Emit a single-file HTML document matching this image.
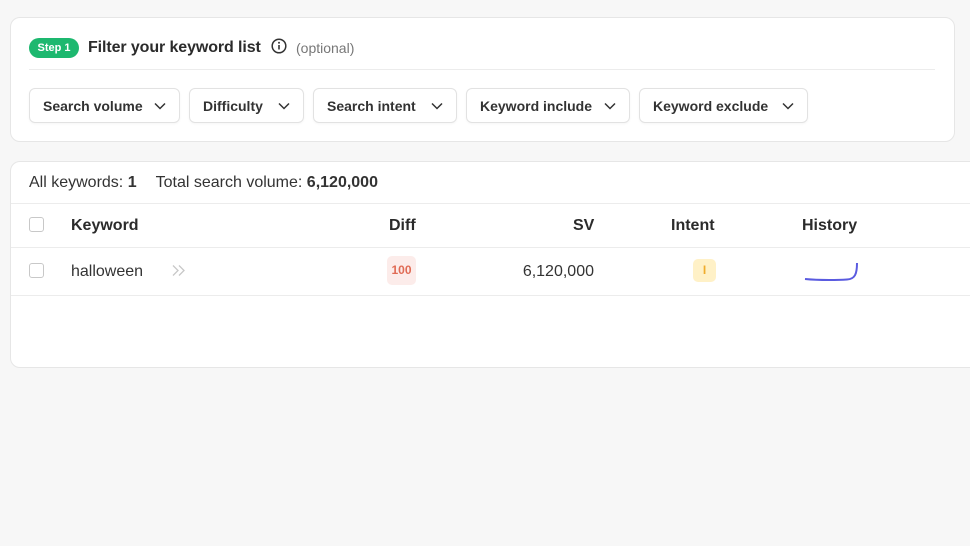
<!DOCTYPE html><html><head><meta charset="utf-8"><style>
*{box-sizing:border-box;margin:0;padding:0}
body{width:970px;height:546px;background:#f7f7f7;font-family:"Liberation Sans",sans-serif;color:#2b2b2b;position:relative;overflow:hidden}
.card{position:absolute;background:#fff;border:1px solid #e6e6e6;border-radius:10px}
.abs{position:absolute;white-space:nowrap}
.btn{position:absolute;top:88px;height:35px;border:1px solid #e2e2e2;border-radius:6px;font-size:14px;font-weight:bold;color:#333;padding-left:13px;line-height:34px;box-shadow:0 1px 2px rgba(0,0,0,.04)}
.btn svg{position:absolute;right:13px;top:13px}
.line{position:absolute;height:1px;background:#ececec}
.cb{position:absolute;width:15px;height:15px;border:1.5px solid #c8c8c8;border-radius:3px}
.th{font-size:16px;font-weight:bold;color:#2b2b2b}
</style></head><body>
<div class="card" style="left:10px;top:17px;width:945px;height:125px"></div>
<div class="abs" style="left:29px;top:38px;width:50px;height:20px;background:#1db86f;border-radius:10px;color:#fff;font-size:11px;font-weight:bold;text-align:center;line-height:20px">Step 1</div>
<div class="abs" style="left:88px;top:39px;font-size:16px;font-weight:bold;color:#2b2b2b;letter-spacing:-0.1px">Filter your keyword list</div>
<svg class="abs" style="left:271px;top:38px" width="16" height="16" viewBox="0 0 16 16"><circle cx="8" cy="8" r="6.8" fill="none" stroke="#333" stroke-width="1.5"/><line x1="8" y1="7" x2="8" y2="11.5" stroke="#333" stroke-width="1.6"/><circle cx="8" cy="4.8" r="1" fill="#333"/></svg>
<div class="abs" style="left:296px;top:40px;font-size:14px;color:#777">(optional)</div>
<div class="line" style="left:29px;top:69px;width:906px"></div>
<div class="btn" style="left:29px;width:151px">Search volume<svg width="12" height="8" viewBox="0 0 12 8"><path d="M1 1.5l5 5 5-5" fill="none" stroke="#333" stroke-width="1.5"/></svg></div>
<div class="btn" style="left:189px;width:115px">Difficulty<svg width="12" height="8" viewBox="0 0 12 8"><path d="M1 1.5l5 5 5-5" fill="none" stroke="#333" stroke-width="1.5"/></svg></div>
<div class="btn" style="left:313px;width:144px">Search intent<svg width="12" height="8" viewBox="0 0 12 8"><path d="M1 1.5l5 5 5-5" fill="none" stroke="#333" stroke-width="1.5"/></svg></div>
<div class="btn" style="left:466px;width:164px">Keyword include<svg width="12" height="8" viewBox="0 0 12 8"><path d="M1 1.5l5 5 5-5" fill="none" stroke="#333" stroke-width="1.5"/></svg></div>
<div class="btn" style="left:639px;width:169px">Keyword exclude<svg width="12" height="8" viewBox="0 0 12 8"><path d="M1 1.5l5 5 5-5" fill="none" stroke="#333" stroke-width="1.5"/></svg></div>

<div class="card" style="left:10px;top:161px;width:975px;height:207px"></div>
<div class="abs" style="left:29px;top:174px;font-size:16px;color:#333">All keywords: <b>1</b><span style="display:inline-block;width:19px"></span>Total search volume: <b>6,120,000</b></div>
<div class="line" style="left:11px;top:203px;width:959px"></div>
<div class="cb" style="left:29px;top:217px"></div>
<div class="abs th" style="left:71px;top:217px">Keyword</div>
<div class="abs th" style="left:389px;top:217px">Diff</div>
<div class="abs th" style="left:573px;top:217px">SV</div>
<div class="abs th" style="left:671px;top:217px">Intent</div>
<div class="abs th" style="left:802px;top:217px">History</div>
<div class="line" style="left:11px;top:247px;width:959px"></div>
<div class="cb" style="left:29px;top:263px"></div>
<div class="abs" style="left:71px;top:263px;font-size:16px;color:#333">halloween</div>
<svg class="abs" style="left:172px;top:264px" width="14" height="13" viewBox="0 0 14 13"><path d="M1 1.5l5 5-5 5M7 1.5l5 5-5 5" fill="none" stroke="#c8c8c8" stroke-width="1.3"/></svg>
<div class="abs" style="left:387px;top:256px;width:29px;height:29px;background:#fcecea;border-radius:5px;color:#e06b55;font-size:12px;font-weight:bold;text-align:center;line-height:29px">100</div>
<div class="abs" style="left:494px;width:100px;text-align:right;top:263px;font-size:16px;color:#333">6,120,000</div>
<div class="abs" style="left:693px;top:259px;width:23px;height:23px;background:#fff1c7;border-radius:5px;color:#f0ac2c;font-size:12px;font-weight:bold;text-align:center;line-height:23px">I</div>
<svg class="abs" style="left:800px;top:256px" width="64" height="30" viewBox="0 0 64 30"><path d="M5 23 C20 24.5 40 24 47 23.5 C55 23 57 18 57 7" fill="none" stroke="#5a5be0" stroke-width="2"/></svg>
<div class="line" style="left:11px;top:295px;width:959px"></div>
</body></html>
